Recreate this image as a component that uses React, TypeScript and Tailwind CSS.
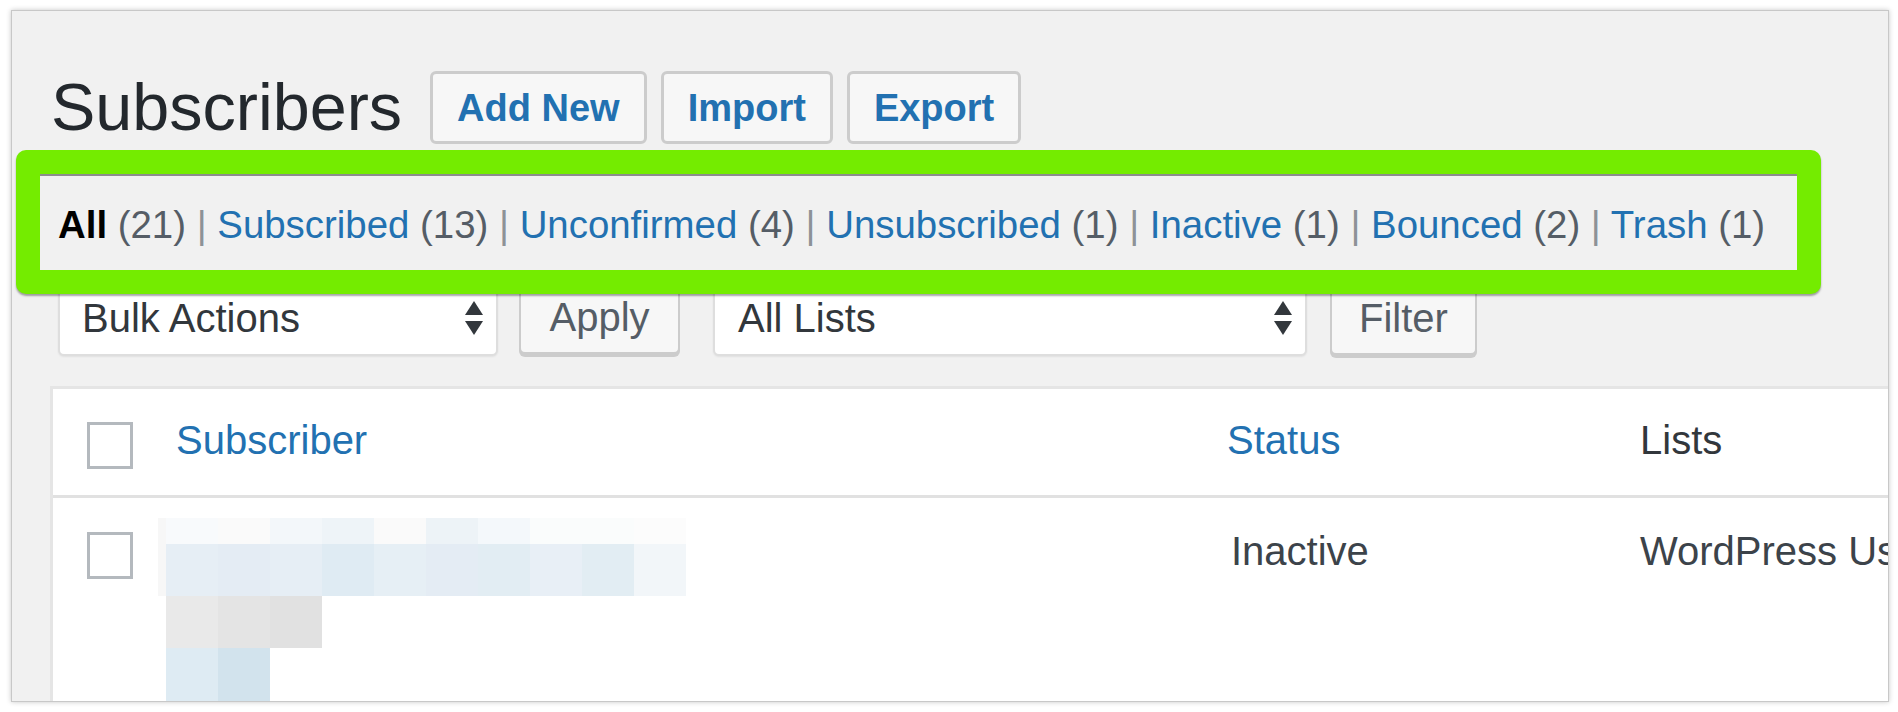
import React from "react";

const FONT = { fontFamily: '"Liberation Sans", Arial, Helvetica, sans-serif' };

const filters: [string, number][] = [
  ["All", 21],
  ["Subscribed", 13],
  ["Unconfirmed", 4],
  ["Unsubscribed", 1],
  ["Inactive", 1],
  ["Bounced", 2],
  ["Trash", 1],
];

const rowA = ["#f8fafc", "#fafafa", "#f3f7fa", "#eef4f8", "#fafafa", "#edf3f7", "#f4f8fb", "#fafcfc", "#fafcfc", "#fcfcfc"];
const rowB = ["#e6eef5", "#e4ecf4", "#e6eef5", "#dfebf3", "#e6eff5", "#e4ecf4", "#e2edf3", "#e8eff6", "#e2edf3", "#f2f6f9"];
const rowC = ["#e9e9e9", "#e4e4e4", "#e1e1e1"];
const rowD = ["#deebf3", "#d2e3ed"];

function Arrows() {
  return (
    <svg width="20" height="36" viewBox="0 0 20 36" className="shrink-0">
      <polygon points="10,1 19,15 1,15" fill="#32373c" />
      <polygon points="1,21 19,21 10,35" fill="#32373c" />
    </svg>
  );
}

function Checkbox() {
  return <div className="w-[46px] h-[47px] border-[3px] border-[#b4b9be] bg-white shrink-0" />;
}

function Mosaic() {
  return (
    <div className="flex flex-col">
      <div className="flex h-[26px]">
        <div className="w-[8px] bg-[#f7f7f7]" />
        {rowA.map((c, i) => (
          <div key={i} className="w-[52px]" style={{ backgroundColor: c }} />
        ))}
      </div>
      <div className="flex h-[52px]">
        <div className="w-[8px] bg-[#f7f7f7]" />
        {rowB.map((c, i) => (
          <div key={i} className="w-[52px]" style={{ backgroundColor: c }} />
        ))}
      </div>
      <div className="flex h-[52px] pl-[8px]">
        {rowC.map((c, i) => (
          <div key={i} className="w-[52px]" style={{ backgroundColor: c }} />
        ))}
      </div>
      <div className="flex h-[60px] pl-[8px]">
        {rowD.map((c, i) => (
          <div key={i} className="w-[52px]" style={{ backgroundColor: c }} />
        ))}
      </div>
    </div>
  );
}

export default function App() {
  return (
    <div
      className="w-[1898px] h-[712px] bg-white pt-[10px] pl-[11px] pr-[9px] pb-[10px] overflow-hidden"
      style={FONT}
    >
      <div className="h-full border border-[#c8c8c8] bg-[#f1f1f1] shadow-[0_0_5px_rgba(0,0,0,0.22)] overflow-hidden flex flex-col">
        {/* Heading */}
        <div className="flex items-center pl-[39px] mt-[60px] h-[73px] shrink-0">
          <h1 className="text-[66.5px] leading-none text-[#23282d] mr-[28px]">Subscribers</h1>
          <div className="flex gap-[14px]">
            {["Add New", "Import", "Export"].map((t) => (
              <div
                key={t}
                className="h-[73px] px-[24px] border-[3px] border-[#cccccc] rounded-[6px] bg-[#f7f7f7] flex items-center text-[38px] leading-none font-bold text-[#2271b1]"
              >
                {t}
              </div>
            ))}
          </div>
        </div>

        {/* Highlighted filter links */}
        <div className="relative z-10 ml-[4px] mt-[6px] w-[1805px] h-[144px] shrink-0 rounded-[10px] bg-[#74ec00] p-[24px] shadow-[0_2px_2px_rgba(0,0,0,0.35)]">
          <div className="h-full bg-[#f1f1f1] shadow-[inset_0_2px_0_#8c8c8c] flex items-center pl-[18px] pt-[6px]">
            <div className="text-[38.4px] leading-none whitespace-pre">
              {filters.map(([name, count], i) => (
                <React.Fragment key={name}>
                  {i > 0 && <span className="text-[#8d9297]"> | </span>}
                  {i === 0 ? (
                    <span className="font-bold text-black">{name}</span>
                  ) : (
                    <span className="text-[#2271b1]">{name}</span>
                  )}
                  <span className="text-[#555d66]">{` (${count})`}</span>
                </React.Fragment>
              ))}
            </div>
          </div>
        </div>

        {/* Toolbar */}
        <div className="flex items-start ml-[46px] mt-[-14px] shrink-0 h-[78px]">
          <div className="w-[440px] h-[76px] bg-white border-2 border-[#dedede] rounded-[6px] shadow-[0_1px_2px_rgba(0,0,0,0.07)] flex items-center justify-between pl-[22px] pr-[12px]">
            <span className="text-[40px] leading-none text-[#32373c]">Bulk Actions</span>
            <Arrows />
          </div>
          <div className="ml-[21px] w-[161px] h-[74px] bg-[#f7f7f7] border-2 border-[#cccccc] rounded-[6px] shadow-[0_3px_0_#cccccc] flex items-center justify-center">
            <span className="text-[40px] leading-none text-[#555d66]">Apply</span>
          </div>
          <div className="ml-[33px] w-[594px] h-[76px] bg-white border-2 border-[#dedede] rounded-[6px] shadow-[0_1px_2px_rgba(0,0,0,0.07)] flex items-center justify-between pl-[23px] pr-[12px]">
            <span className="text-[40px] leading-none text-[#32373c]">All Lists</span>
            <Arrows />
          </div>
          <div className="ml-[23px] w-[147px] h-[75px] bg-[#f7f7f7] border-2 border-[#cccccc] rounded-[6px] shadow-[0_3px_0_#cccccc] flex items-center justify-center">
            <span className="text-[40px] leading-none text-[#555d66]">Filter</span>
          </div>
        </div>

        {/* Table */}
        <div className="ml-[38px] mr-[-10px] mt-[28px] flex-1 bg-white border-[3px] border-[#e5e5e5] flex flex-col">
          <div className="h-[109px] shrink-0 border-b-[3px] border-[#e1e1e1] flex items-center">
            <div className="w-[123px] pl-[34px] pt-[6px] shrink-0">
              <Checkbox />
            </div>
            <div className="w-[1051px] shrink-0 text-[40px] leading-none text-[#2271b1] pb-[4px]">Subscriber</div>
            <div className="w-[413px] shrink-0 text-[40px] leading-none text-[#2271b1] pb-[4px]">Status</div>
            <div className="text-[40px] leading-none text-[#32373c] whitespace-nowrap pb-[4px]">Lists</div>
          </div>
          <div className="flex items-start flex-1">
            <div className="w-[123px] pl-[34px] pt-[34px] shrink-0">
              <Checkbox />
            </div>
            <div className="w-[1051px] shrink-0 pt-[20px]">
              <div className="ml-[-18px]">
                <Mosaic />
              </div>
            </div>
            <div className="w-[413px] shrink-0 pt-[33px] pl-[4px] text-[40px] leading-none text-[#3c434a]">Inactive</div>
            <div className="pt-[33px] text-[40px] leading-none text-[#3c434a] whitespace-nowrap">WordPress Users</div>
          </div>
        </div>
      </div>
    </div>
  );
}
